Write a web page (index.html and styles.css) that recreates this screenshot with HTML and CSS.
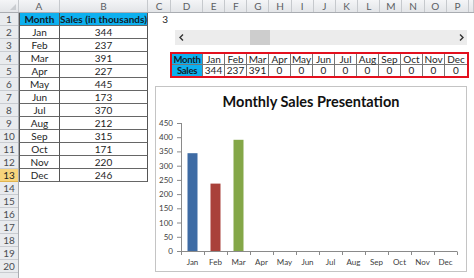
FILE: index.html
```html
<!DOCTYPE html>
<html lang="en">
<head>
    <meta charset="UTF-8">
    <title>Monthly Sales Presentation</title>
    <link rel="stylesheet" href="styles.css">
</head>
<body>
<div class="sheet">
    <div class="colheads">
        <div class="corner"></div>
        <div class="ch">A</div>
        <div class="ch">B</div>
        <div class="ch">C</div>
        <div class="ch">D</div>
        <div class="ch">E</div>
        <div class="ch">F</div>
        <div class="ch">G</div>
        <div class="ch">H</div>
        <div class="ch">I</div>
        <div class="ch">J</div>
        <div class="ch">K</div>
        <div class="ch">L</div>
        <div class="ch">M</div>
        <div class="ch">N</div>
        <div class="ch">O</div>
        <div class="ch">P</div>
        <div class="ch"></div>
    </div>

    <div class="body">
        <div class="rownums">
            <div class="rn">1</div><div class="rn">2</div><div class="rn">3</div>
            <div class="rn">4</div><div class="rn">5</div><div class="rn">6</div>
            <div class="rn">7</div><div class="rn">8</div><div class="rn">9</div>
            <div class="rn">10</div><div class="rn">11</div><div class="rn">12</div>
            <div class="rn active">13</div><div class="rn">14</div><div class="rn">15</div>
            <div class="rn">16</div><div class="rn">17</div><div class="rn">18</div>
            <div class="rn">19</div><div class="rn">20</div><div class="rn"></div>
        </div>

        <div class="data">
            <div class="cell head">Month</div><div class="cell head">Sales (in thousands)</div>
            <div class="cell">Jan</div><div class="cell">344</div>
            <div class="cell">Feb</div><div class="cell">237</div>
            <div class="cell">Mar</div><div class="cell">391</div>
            <div class="cell">Apr</div><div class="cell">227</div>
            <div class="cell">May</div><div class="cell">445</div>
            <div class="cell">Jun</div><div class="cell">173</div>
            <div class="cell">Jul</div><div class="cell">370</div>
            <div class="cell">Aug</div><div class="cell">212</div>
            <div class="cell">Sep</div><div class="cell">315</div>
            <div class="cell">Oct</div><div class="cell">171</div>
            <div class="cell">Nov</div><div class="cell">220</div>
            <div class="cell">Dec</div><div class="cell">246</div>
        </div>

        <div class="side">
            <div class="c1">3</div>

            <div class="scroll">
                <svg class="arrow" width="5" height="7" viewBox="0 0 5 7"><path d="M4 0.5 L1 3.5 L4 6.5" fill="none" stroke="#333" stroke-width="1.4"/></svg>
                <div class="thumb"></div>
                <svg class="arrow right" width="5" height="7" viewBox="0 0 5 7"><path d="M1 0.5 L4 3.5 L1 6.5" fill="none" stroke="#333" stroke-width="1.4"/></svg>
            </div>

            <div class="months">
                <div class="mc label">Month</div>
                <div class="mc">Jan</div><div class="mc">Feb</div><div class="mc">Mar</div>
                <div class="mc">Apr</div><div class="mc">May</div><div class="mc">Jun</div>
                <div class="mc">Jul</div><div class="mc">Aug</div><div class="mc">Sep</div>
                <div class="mc">Oct</div><div class="mc">Nov</div><div class="mc">Dec</div>
                <div class="mc label">Sales</div>
                <div class="mc">344</div><div class="mc">237</div><div class="mc">391</div>
                <div class="mc">0</div><div class="mc">0</div><div class="mc">0</div>
                <div class="mc">0</div><div class="mc">0</div><div class="mc">0</div>
                <div class="mc">0</div><div class="mc">0</div><div class="mc">0</div>
            </div>

            <div class="chart">
                <div class="title">Monthly Sales Presentation</div>
                <svg class="plot" width="310" height="154" viewBox="0 0 310 154">
                    <g class="ylabels">
                        <text x="17" y="137">0</text>
                        <text x="17" y="123">50</text>
                        <text x="17" y="108.6">100</text>
                        <text x="17" y="94.3">150</text>
                        <text x="17" y="80.1">200</text>
                        <text x="17" y="65.9">250</text>
                        <text x="17" y="51.7">300</text>
                        <text x="17" y="37.4">350</text>
                        <text x="17" y="23.2">400</text>
                        <text x="17" y="9">450</text>
                    </g>
                    <path class="axis" d="M25.5 6 V134.5 M21 6.5 H25.5 M21 20.7 H25.5 M21 34.9 H25.5 M21 49.2 H25.5 M21 63.4 H25.5 M21 77.6 H25.5 M21 91.8 H25.5 M21 106 H25.5 M21 120.3 H25.5 M21 134.5 H301"/>
                    <path class="axis" d="M25.5 134.5 V138 M48.5 134.5 V138 M71.5 134.5 V138 M94.5 134.5 V138 M117.5 134.5 V138 M140.5 134.5 V138 M163.5 134.5 V138 M186.5 134.5 V138 M209.5 134.5 V138 M232.5 134.5 V138 M255.5 134.5 V138 M278.5 134.5 V138 M301.5 134.5 V138"/>
                    <rect x="31.5" y="36.2" width="10" height="97.8" fill="#3e6ba4"/>
                    <rect x="54.5" y="66.6" width="10" height="67.4" fill="#a9413a"/>
                    <rect x="77.5" y="22.8" width="10" height="111.2" fill="#84a748"/>
                    <g class="xlabels">
                        <text x="36.5" y="148">Jan</text>
                        <text x="59.5" y="148">Feb</text>
                        <text x="82.5" y="148">Mar</text>
                        <text x="105.5" y="148">Apr</text>
                        <text x="128.5" y="148">May</text>
                        <text x="151.5" y="148">Jun</text>
                        <text x="174.5" y="148">Jul</text>
                        <text x="197.5" y="148">Aug</text>
                        <text x="220.5" y="148">Sep</text>
                        <text x="243.5" y="148">Oct</text>
                        <text x="266.5" y="148">Nov</text>
                        <text x="289.5" y="148">Dec</text>
                    </g>
                </svg>
            </div>
        </div>
    </div>
</div>
</body>
</html>
```

FILE: styles.css
```css
* {
    box-sizing: border-box;
}
body {
    margin: 0;
    background: #fff;
    font-family: Lato, "Liberation Sans", sans-serif;
    color: #1e1e1e;
}
.sheet {
    width: 474px;
    height: 278px;
    overflow: hidden;
}

/* column letters */
.colheads {
    display: grid;
    grid-template-columns: 19px 41px 88px 23px 32px repeat(12, 1fr) 5px;
    height: 13px;
    background: linear-gradient(#f4f5f7, #e3e5e8);
    border-bottom: 1px solid #a9acb1;
}
.ch, .corner {
    font-size: 10px;
    line-height: 12px;
    color: #5b5e63;
    text-align: center;
    border-right: 1px solid #c6c9cd;
}
.corner {
    position: relative;
}
.corner::after {
    content: "";
    position: absolute;
    right: 2px;
    bottom: 2px;
    border-left: 6px solid transparent;
    border-bottom: 6px solid #c9ccd0;
}

.body {
    display: flex;
    height: 265px;
}

/* row numbers */
.rownums {
    flex: none;
    width: 19px;
    background: #e9ebee;
    border-right: 1px solid #a9acb1;
}
.rn {
    height: 13px;
    font-size: 10px;
    line-height: 12px;
    color: #4a4d52;
    text-align: center;
    border-bottom: 1px solid #c9ccd1;
}
.rn.active {
    background: #f7d47c;
    border-bottom-color: #e2b54f;
    color: #222;
}

/* data table A:B */
.data {
    flex: none;
    align-self: flex-start;
    display: grid;
    grid-template-columns: 41px 88px;
    grid-auto-rows: 13px;
}
.cell {
    font-size: 10px;
    line-height: 12px;
    text-align: center;
    border-right: 1px solid #555;
    border-bottom: 1px solid #666;
}
.cell:nth-child(odd) {
    border-left: 1px solid #555;
}
.cell.head {
    background: #0db0ef;
    font-weight: bold;
    color: #10202a;
}

/* right side objects */
.side {
    flex: 1;
    display: flex;
    flex-direction: column;
    align-items: flex-start;
}
.c1 {
    width: 23px;
    height: 13px;
    font-size: 10px;
    line-height: 12px;
    text-align: right;
    padding-right: 3px;
}

.scroll {
    display: flex;
    align-items: center;
    margin: 4px 0 0 27px;
    width: 292px;
    height: 15px;
    padding: 0 3px 0 4px;
    background: #ececec;
}
.thumb {
    margin-left: 66px;
    width: 20px;
    height: 15px;
    background: #cdcdcd;
}
.arrow.right {
    margin-left: auto;
}

.months {
    display: grid;
    grid-template-columns: 31px repeat(12, 1fr);
    grid-auto-rows: 11px;
    margin: 7px 0 0 22px;
    width: 299px;
    border: 2px solid #e3101e;
}
.mc {
    font-size: 10px;
    line-height: 11px;
    text-align: center;
    border-right: 1px solid #777;
}
.mc:nth-child(-n+13) {
    border-bottom: 1px solid #777;
}
.mc:nth-child(13n) {
    border-right: none;
}
.mc.label {
    background: #0db0ef;
    font-size: 9.5px;
    letter-spacing: -0.3px;
    font-weight: bold;
    color: #10202a;
}

/* chart */
.chart {
    margin: 8px 0 0 7px;
    width: 312px;
    height: 186px;
    border: 1px solid #c4c4c4;
    background: #fff;
}
.title {
    height: 30px;
    line-height: 30px;
    text-align: center;
    font-size: 14.5px;
    font-weight: bold;
    color: #111;
}
.plot {
    display: block;
}
.axis {
    fill: none;
    stroke: #8a8a8a;
    stroke-width: 1;
}
.ylabels text {
    font-size: 8px;
    fill: #404040;
    text-anchor: end;
}
.xlabels text {
    font-size: 8px;
    fill: #404040;
    text-anchor: middle;
}
```
